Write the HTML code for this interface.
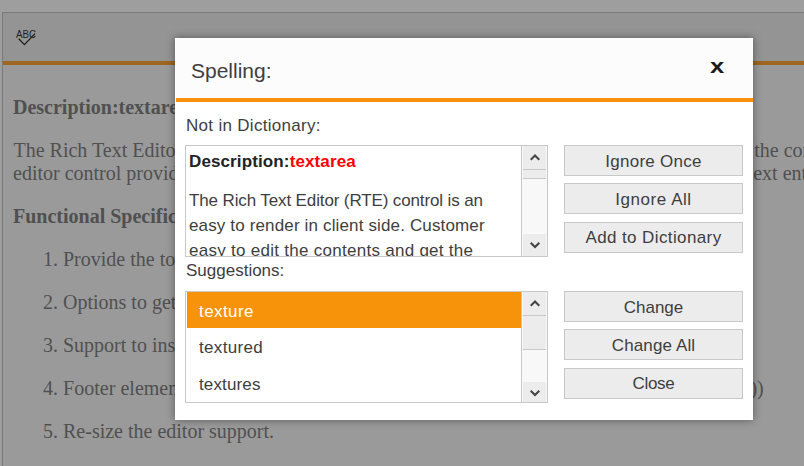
<!DOCTYPE html>
<html>
<head>
<meta charset="utf-8">
<title>Spell Check</title>
<style>
html,body{margin:0;padding:0;}
body{width:804px;height:466px;overflow:hidden;background:#9e9e9e;position:relative;font-family:"Liberation Serif",serif;}
#editor{position:absolute;left:2px;top:12px;width:820px;height:470px;border:1px solid #7a7a7a;box-sizing:border-box;background:#9a9a9a;}
#toolbar{position:absolute;left:0;top:0;right:0;height:48px;background:#949494;}
#tbline{position:absolute;left:0;top:48px;right:0;height:4px;background:#9e6620;}
#content{position:absolute;left:10px;top:51px;width:1400px;color:#505050;font-size:20px;line-height:23px;}
#content p{margin:0;position:absolute;left:0;white-space:nowrap;}
#content .li{position:absolute;left:30px;white-space:nowrap;}
#dialog{position:absolute;left:175px;top:38px;width:578px;height:382px;background:#fff;box-shadow:0 0 8px rgba(0,0,0,0.42);font-family:"Liberation Sans",sans-serif;color:#3e3e3e;}
#dlghead{position:absolute;left:1px;top:1px;width:576px;height:59px;background:#fcfcfc;}
#dlgline{position:absolute;left:1px;top:60px;width:577px;height:4px;background:#f8920c;}
#title{position:absolute;left:16px;top:18.7px;font-size:21px;line-height:28px;white-space:nowrap;}
.lbl{position:absolute;font-size:17px;line-height:20px;white-space:nowrap;}
.box{position:absolute;left:10px;width:363px;box-sizing:border-box;border:1px solid #c8c8c8;background:#fff;overflow:hidden;}
.sb{position:absolute;right:0;top:0;bottom:0;width:25px;border-left:1px solid #c8c8c8;background:#f8f8f8;}
.sb .up,.sb .dn{position:absolute;left:1px;width:23px;background:#ececec;}
.sb .up{top:0}.sb .dn{bottom:0}
.sb .th{position:absolute;left:1px;width:23px;background:#ececec;border-top:1px solid #c8c8c8;border-bottom:1px solid #c8c8c8;box-sizing:border-box;}
.sb svg{position:absolute;left:7px;}
.btn{position:absolute;left:389px;width:179px;height:31px;box-sizing:border-box;border:1px solid #c8c8c8;background:#ececec;font-size:17px;line-height:29px;text-align:center;white-space:nowrap;}
.txt{position:absolute;left:3px;font-size:17px;line-height:25px;white-space:nowrap;}
.item{position:absolute;left:1px;width:334px;height:36px;font-size:17px;line-height:38px;padding-left:12px;box-sizing:border-box;white-space:nowrap;}
.item.sel{background:#f7920b;color:#fff;}
</style>
</head>
<body>
<div id="editor">
  <div id="toolbar">
    <svg width="30" height="24" viewBox="0 0 30 24" style="position:absolute;left:10px;top:13px">
      <text x="3" y="11.9" font-family="Liberation Sans, sans-serif" font-size="11" fill="#1e1e1e" textLength="20" lengthAdjust="spacingAndGlyphs">ABC</text>
      <path d="M5.7 12.8 L11.4 18.6 L22 7.6" fill="none" stroke="#1e1e1e" stroke-width="1.3"/>
    </svg>
  </div>
  <div id="tbline"></div>
  <div id="content">
    <p style="top:32px;font-weight:bold">Description:textarea</p>
    <p style="top:75px;left:0.5px">The Rich Text Editor (RTE) control is an easy to render in client side. Customer easy to edit the contents and get the content using</p>
    <p style="top:98px">editor control provides a simple solution to format the contents</p>
    <p style="top:98px;left:734.7px">text entry using</p>
    <p style="top:141px;font-weight:bold">Functional Specifications/Requirements:</p>
    <div class="li" style="top:184px">1. Provide the tool bar support, it’s also customizable.</div>
    <div class="li" style="top:227px">2. Options to get the HTML elements with styles.</div>
    <div class="li" style="top:270px">3. Support to insert image from a defined path.</div>
    <div class="li" style="top:313px;word-spacing:0.12px">4. Footer elements and styles(tag / Element information , Action button (Upload, Cancel))</div>
    <div class="li" style="top:356px">5. Re-size the editor support.</div>
  </div>
</div>
<div id="dialog">
  <div id="dlghead"></div>
  <div id="title"><span id="t_title">Spelling:</span></div>
  <div id="closex" style="position:absolute;left:534.5px;top:13.5px;width:14px;font-size:20.5px;line-height:28px;font-weight:bold;color:#1a1a1a;transform:scaleX(1.25);transform-origin:0 0;">x</div>
  <div id="dlgline"></div>

  <div class="lbl" style="left:11px;top:78px"><span id="t_nid" style="letter-spacing:0.30px">Not in Dictionary:</span></div>
  <div class="box" style="top:107px;height:112px">
    <div class="txt" style="top:3px;font-weight:bold;color:#222"><span id="t_desc" style="letter-spacing:0.12px">Description:<span style="color:#f00">textarea</span></span></div>
    <div class="txt" style="top:42px"><span id="t_l1" style="letter-spacing:-0.125px">The Rich Text Editor (RTE) control is an</span></div>
    <div class="txt" style="top:67px"><span id="t_l2" style="letter-spacing:0.146px">easy to render in client side. Customer</span></div>
    <div class="txt" style="top:92px"><span id="t_l3" style="letter-spacing:0.276px">easy to edit the contents and get the</span></div>
    <div class="sb">
      <div class="up" style="height:23px"><svg width="10" height="7" viewBox="0 0 10 7" style="top:8px"><polygon points="0,5 5,0 10,5 8.6,6.5 5,2.9 1.4,6.5" fill="#444"/></svg></div>
      <div class="th" style="top:23px;height:10px"></div>
      <div class="dn" style="height:22px"><svg width="10" height="7" viewBox="0 0 10 7" style="top:7.8px"><polygon points="0,1.5 5,6.5 10,1.5 8.6,0 5,3.6 1.4,0" fill="#444"/></svg></div>
    </div>
  </div>

  <div class="lbl" style="left:11px;top:223px"><span id="t_sug">Suggestions:</span></div>
  <div class="box" style="top:253px;height:112px">
    <div class="item sel" style="top:0"><span id="t_i1" style="letter-spacing:0.43px;position:relative;top:1px">texture</span></div>
    <div class="item" style="top:36.67px"><span id="t_i2" style="letter-spacing:0.33px">textured</span></div>
    <div class="item" style="top:73.33px"><span id="t_i3" style="letter-spacing:0.14px;position:relative;top:1px">textures</span></div>
    <div class="sb">
      <div class="up" style="height:23px"><svg width="10" height="7" viewBox="0 0 10 7" style="top:8px"><polygon points="0,5 5,0 10,5 8.6,6.5 5,2.9 1.4,6.5" fill="#444"/></svg></div>
      <div class="th" style="top:23px;height:35px"></div>
      <div class="dn" style="height:20px"><svg width="10" height="7" viewBox="0 0 10 7" style="top:7.8px"><polygon points="0,1.5 5,6.5 10,1.5 8.6,0 5,3.6 1.4,0" fill="#444"/></svg></div>
    </div>
  </div>

  <div class="btn" style="top:107px;line-height:31px"><span id="t_b1" style="letter-spacing:0.26px">Ignore Once</span></div>
  <div class="btn" style="top:145px;line-height:31px"><span id="t_b2" style="letter-spacing:0.54px">Ignore All</span></div>
  <div class="btn" style="top:184px"><span id="t_b3" style="letter-spacing:0.39px">Add to Dictionary</span></div>
  <div class="btn" style="top:253px;line-height:31px"><span id="t_b4">Change</span></div>
  <div class="btn" style="top:291px;line-height:31px"><span id="t_b5" style="letter-spacing:0.13px">Change All</span></div>
  <div class="btn" style="top:330px"><span id="t_b6" style="letter-spacing:-0.30px">Close</span></div>
</div>
</body>
</html>
